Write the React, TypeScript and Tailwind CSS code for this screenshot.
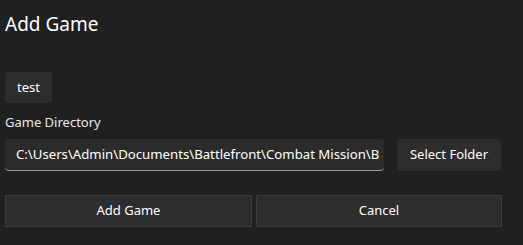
export default function App() {
  return (
    <div
      className="w-[523px] h-[245px] bg-[#202020] text-white pl-[5px] pt-[10px] overflow-hidden"
      style={{ fontFamily: '"Noto Sans", "Open Sans", sans-serif' }}
    >
      {/* Title */}
      <h1 className="text-[19px] leading-[28px] font-normal">Add Game</h1>

      {/* Name chip */}
      <div className="mt-[34px] flex">
        <button className="h-[31px] px-[12px] rounded-[4px] bg-[#2d2d2d] text-[13px] text-white">
          test
        </button>
      </div>

      {/* Directory */}
      <div className="mt-[10px] text-[13px] leading-[18px] text-[#e8e8e8]">Game Directory</div>
      <div className="mt-[8px] flex items-center">
        <div className="w-[379px] h-[32px] rounded-[4px] bg-[#2b2b2b] border-b border-[#9a9a9a] flex items-center pl-[11px] overflow-hidden whitespace-nowrap text-[13.2px] text-white">
          C:\Users\Admin\Documents\Battlefront\Combat Mission\B
        </div>
        <button className="ml-[13px] w-[104px] h-[32px] rounded-[4px] bg-[#2d2d2d] text-[13px] text-white">
          Select Folder
        </button>
      </div>

      {/* Actions */}
      <div className="mt-[24px] flex gap-[4px]">
        <button className="w-[247px] h-[32px] bg-[#2d2d2d] border border-[#3c3c3c] text-[13px] text-white">
          Add Game
        </button>
        <button className="w-[246px] h-[32px] bg-[#2d2d2d] border border-[#3c3c3c] text-[13px] text-white">
          Cancel
        </button>
      </div>
    </div>
  );
}
